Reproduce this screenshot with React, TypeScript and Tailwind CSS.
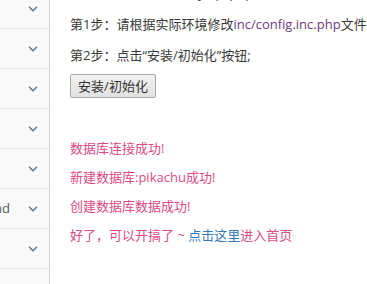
import React from "react";

const Chevron = () => (
  <svg width="10" height="6" viewBox="0 0 10 6" className="block">
    <path d="M1 0.8 L5 4.8 L9 0.8" fill="none" stroke="#5d6f86" strokeWidth="1.3" />
  </svg>
);

export default function App() {
  const rows = [0, 1, 2, 3, 4, 5, 6, 7];
  const font = { fontFamily: '"Open Sans", "Noto Sans CJK SC", sans-serif' };
  return (
    <div className="flex w-[367px] h-[284px] overflow-hidden bg-white" style={font}>
      <div className="w-[50px] shrink-0 bg-[#f9f9f9] border-r border-[#d5d5d5] flex flex-col overflow-hidden">
        <div className="mt-[-11px] flex flex-col">
          {rows.map((i) => (
            <div key={i} className="h-[40px] shrink-0 border-b border-[#e5e5e5] flex items-center overflow-hidden relative">
              <div className="w-[10px] shrink-0 flex justify-end">
                {i === 5 ? (
                  <span className="whitespace-nowrap text-[13px] text-[#585858]">Unsafe Fileupload</span>
                ) : null}
              </div>
              <div className="ml-[18px]">
                <Chevron />
              </div>
            </div>
          ))}
        </div>
      </div>
      <div className="flex-1 pl-[20px] flex flex-col text-[13px] leading-[20px] text-[#393939] whitespace-nowrap overflow-hidden">
        <div className="mt-[-17px]">第0步：请提前安装“mysql+php+中间件”的环境;</div>
        <div className="mt-[11px]">
          第1步：请根据实际环境修改<span className="text-[#6d3b80]">inc/config.inc.php</span>文件
        </div>
        <div className="mt-[11px]">第2步：点击“安装/初始化”按钮;</div>
        <div className="mt-[9px]">
          <button className="h-[24px] w-[86px] border border-[#a9a9a9] rounded-[2px] bg-gradient-to-b from-[#f2f2f2] to-[#e2e2e2] text-[13px] text-[#333] leading-[20px]">
            安装/初始化
          </button>
        </div>
        <div className="mt-[40px] text-[#dd4a84]">数据库连接成功!</div>
        <div className="mt-[9px] text-[#dd4a84]">新建数据库:pikachu成功!</div>
        <div className="mt-[9px] text-[#dd4a84]">创建数据库数据成功!</div>
        <div className="mt-[9px] text-[#dd4a84]">
          好了，可以开搞了 ~ <span className="text-[#337ab7]">点击这里</span>进入首页
        </div>
      </div>
    </div>
  );
}
